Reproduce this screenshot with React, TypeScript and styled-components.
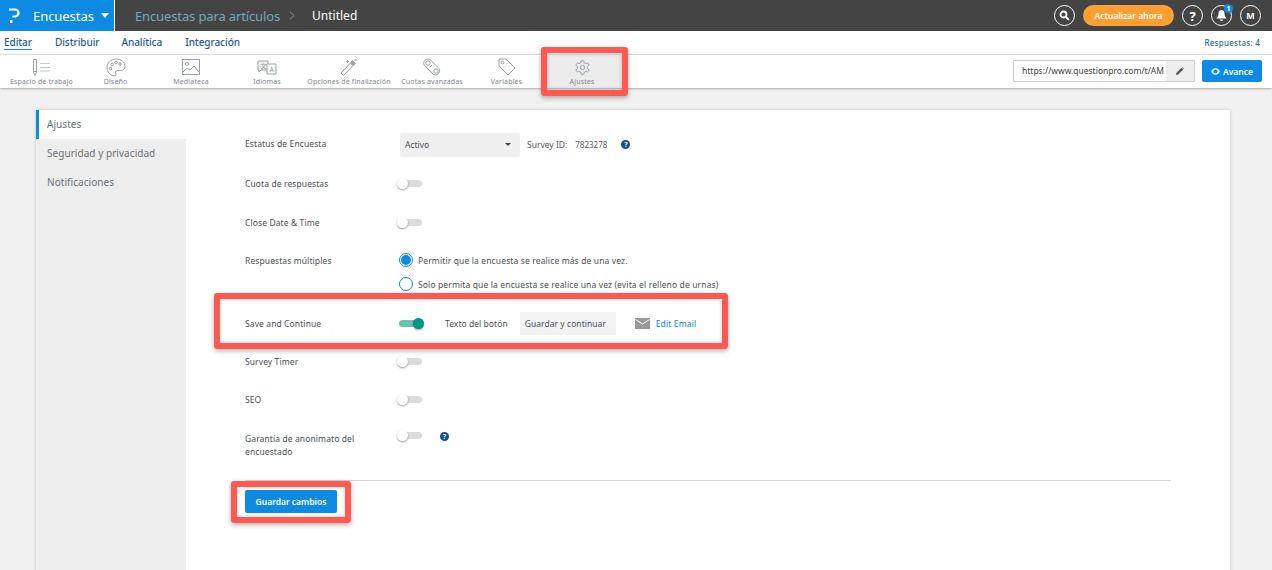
import React from "react";
import styled, { createGlobalStyle } from "styled-components";

const Global = createGlobalStyle`
  html, body { margin: 0; padding: 0; background: #f1f1f1; overflow: hidden; }
  * { box-sizing: border-box; }
  body { font-family: "Noto Sans", "Open Sans", sans-serif; }
`;
const Page = styled.div`position: relative; width: 1272px; height: 570px; overflow: hidden; background: #f1f1f1;`;
const Header = styled.header`display: flex; align-items: center; height: 31px; background: #444444; color: #fff;`;
const Brand = styled.div`display: flex; align-items: center; width: 115px; height: 31px; background: #0d8ae2; border-right: 1px solid #fff; padding-left: 9px; flex: none;`;
const BrandName = styled.span`font-size: 13px; margin-left: 13px; letter-spacing: -0.05px;`;
const Caret = styled.span`width: 0; height: 0; border: 4px solid transparent; border-top: 5px solid #fff; border-bottom: 0; margin-left: 7px;`;
const Crumb = styled.span`font-size: 13px; color: #72a9b8; margin-left: 20px; letter-spacing: -0.13px;`;
const Chevron = styled.span`margin-left: 9px; display: flex; color: #8c8c8c;`;
const CurrentTitle = styled.span`font-size: 12px; margin-left: 17px; color: #fff;`;
const HeaderRight = styled.div`display: flex; align-items: center; margin-left: auto; padding-right: 2px; width: 218px;`;
const CircleBtn = styled.span<{ $ml: number; $fs?: number }>`position: relative; display: flex; align-items: center; justify-content: center; width: 21px; height: 21px; border: 1px solid #fff; border-radius: 50%; margin-left: ${p => p.$ml}px; font-size: ${p => p.$fs ?? 12}px; font-weight: 700; flex: none;`;
const Upgrade = styled.span`display: flex; align-items: center; justify-content: center; width: 91px; height: 21px; background: #ff9e33; border-radius: 11px; font-size: 8.5px; font-weight: 600; margin-left: 8px; flex: none;`;
const NotifBadge = styled.span`position: absolute; top: -2px; right: -2px; width: 9px; height: 9px; border-radius: 50%; background: #0d8ae2; font-size: 7px; font-weight: 700; line-height: 9px; text-align: center;`;

const NavRow = styled.nav`display: flex; align-items: center; height: 23px; background: #fff; padding: 0 12px 0 4px; border-bottom: 0;`;
const NavLink = styled.span<{ $active?: boolean; $ml: number }>`font-size: 10px; font-weight: 500; color: #1f5c99; margin-left: ${p => p.$ml}px; line-height: 13px; border-bottom: ${p => (p.$active ? "1px solid #0d8ae2" : "1px solid transparent")}; letter-spacing: -0.05px;`;
const Responses = styled.span`margin-left: auto; font-size: 8px; font-weight: 500; color: #2f6aa3; letter-spacing: 0.25px;`;

const Toolbar = styled.div`display: flex; align-items: flex-start; height: 34px; background: #fff; border-top: 1px solid #dcdcdc; box-shadow: 0 1px 2px rgba(0,0,0,.28); position: relative;`;
const Tool = styled.div<{ $w: number; $active?: boolean }>`display: flex; flex-direction: column; align-items: center; width: ${p => p.$w}px; height: 33px; flex: none; background: ${p => (p.$active ? "#ececec" : "transparent")}; padding-right: ${p => (p.$active ? "5px" : "0")};`;
const ToolIcon = styled.span`display: flex; height: 22px; align-items: center; justify-content: center; padding-top: 2px;`;
const ToolLabel = styled.span`font-size: 7px; font-weight: 400; color: #7f8692; line-height: 10px; white-space: nowrap; letter-spacing: 0.15px;`;
const ToolRight = styled.div`display: flex; align-items: center; margin-left: auto; padding: 5px 10px 0 0;`;
const UrlBox = styled.div`display: flex; width: 182px; height: 22px; border: 1px solid #cfcfcf; background: #fff; border-radius: 1px;`;
const UrlText = styled.span`width: 152px; overflow: hidden; white-space: nowrap; font-size: 8.5px; line-height: 20px; padding-left: 8px; color: #444; flex: none;`;
const UrlEdit = styled.span`display: flex; flex: 1; align-items: center; justify-content: center; background: #eeeeee;`;
const Preview = styled.span`display: flex; align-items: center; justify-content: center; gap: 3px; width: 60px; height: 22px; margin-left: 7px; background: #0d8ae2; border-radius: 2px; color: #fff; font-size: 8.5px; font-weight: 600;`;

const Main = styled.main`padding: 22px 42px 0 36px;`;
const Card = styled.section`display: flex; height: 470px; background: #fff; box-shadow: 0 0 3px rgba(0,0,0,.22);`;
const Side = styled.aside`width: 150px; background: #eeeeee; flex: none;`;
const SideItem = styled.div<{ $active?: boolean }>`height: 29px; line-height: 29px; font-size: 10px; letter-spacing: 0.05px; color: #6a7078; padding-left: ${p => (p.$active ? "8px" : "11px")}; background: ${p => (p.$active ? "#fff" : "transparent")}; border-left: ${p => (p.$active ? "3px solid #0d8ae2" : "0")};`;
const Form = styled.div`flex: 1; padding: 15px 59px 0 59px;`;
const Row = styled.div<{ $h: number }>`display: flex; align-items: center; height: ${p => p.$h}px;`;
const TopRow = styled.div<{ $h: number; $pt: number }>`display: flex; align-items: flex-start; height: ${p => p.$h}px; padding-top: ${p => p.$pt}px;`;
const Label = styled.div<{ $lift?: boolean }>`width: 152px; flex: none; font-size: 8.5px; line-height: 13px; color: #4b5159; letter-spacing: 0.1px; margin-bottom: ${p => (p.$lift ? "3px" : "0")};`;
const Select = styled.div`display: flex; align-items: center; justify-content: space-between; width: 120px; height: 24px; background: #efefef; border-radius: 2px; padding: 0 9px 0 5px; margin-left: 3px; font-size: 8.5px; color: #4b5159;`;
const SelectCaret = styled.span`width: 0; height: 0; border: 3px solid transparent; border-top: 3px solid #444; border-bottom: 0;`;
const SurveyLabel = styled.span`font-size: 8.5px; color: #555b63; margin-left: 7px;`;
const SurveyId = styled.span`font-size: 8px; color: #555b63; margin-left: 8px;`;
const Help = styled.span<{ $ml: number }>`display: flex; align-items: center; justify-content: center; width: 9px; height: 9px; border-radius: 50%; background: #0f4f96; color: #fff; font-size: 7px; font-weight: 700; margin-left: ${p => p.$ml}px; flex: none;`;
const Track = styled.span<{ $on?: boolean }>`position: relative; display: block; width: 24px; height: 7px; border-radius: 4px; margin-left: ${p => (p.$on ? "2px" : "1px")}; background: ${p => (p.$on ? "#6fc0b4" : "#dcdcdc")}; flex: none;`;
const Knob = styled.span<{ $on?: boolean }>`position: absolute; top: -2px; left: ${p => (p.$on ? "14px" : "-1px")}; width: 11px; height: 11px; border-radius: 50%; background: ${p => (p.$on ? "#009784" : "#fff")}; box-shadow: 0 1px 2px rgba(0,0,0,.4);`;
const Radios = styled.div`display: flex; flex-direction: column; margin: -6px 0 0 2px;`;
const RadioRow = styled.div`display: flex; align-items: center; height: 24px;`;
const Radio = styled.span<{ $on?: boolean }>`display: flex; align-items: center; justify-content: center; width: 14px; height: 14px; border: 1px solid #0d8ae2; border-radius: 50%; background: #fff; flex: none; &::after { content: ""; display: ${p => (p.$on ? "block" : "none")}; width: 10px; height: 10px; border-radius: 50%; background: #0d8ae2; }`;
const RadioText = styled.span`font-size: 8.5px; color: #4b5159; margin-left: 5px; white-space: nowrap; letter-spacing: 0.13px;`;
const ButtonTextLabel = styled.span`font-size: 8.5px; color: #4b5159; margin-left: 22px; letter-spacing: 0.05px;`;
const TextBox = styled.span`display: flex; align-items: center; width: 96px; height: 23px; margin-left: 12px; padding-left: 5px; background: #f3f3f3; font-size: 8.5px; color: #4b5159; white-space: nowrap; overflow: hidden; letter-spacing: 0.05px;`;
const MailWrap = styled.span`display: flex; margin-left: 19px;`;
const EditLink = styled.span`font-size: 8.5px; color: #0d8ae2; margin-left: 6px; letter-spacing: 0.15px;`;
const Divider = styled.hr`height: 1px; border: 0; background: #d4d4d4; margin: 0; width: 926px;`;
const SaveBtn = styled.button`display: block; width: 92px; height: 23px; margin-top: 9px; border: 0; border-radius: 2px; background: #0d8ae2; color: #fff; font-family: inherit; font-size: 8.5px; font-weight: 600; padding: 0;`;

const Mark = styled.div<{ $x: number; $y: number; $w: number; $h: number }>`
  position: absolute; left: ${p => p.$x}px; top: ${p => p.$y}px; width: ${p => p.$w}px; height: ${p => p.$h}px;
  border: 6px solid #ff5a52; border-radius: 3px; box-shadow: 0 2px 5px rgba(0,0,0,.3), inset 0 0 4px rgba(0,0,0,.22); pointer-events: none;
`;

const S = { fill: "none", stroke: "#9aa0aa", strokeWidth: 1 } as const;
const icons = {
  work: <svg width="20" height="17" viewBox="0 0 20 17" {...S}><path d="M1.5 .5h3v13l-1.500 3-1.500-3zM1.500 12.500h3" /><path d="M8 4.500h10M8 8.500h10M8 12h10" stroke="#c4c7cc" /></svg>,
  palette: <svg width="20" height="19" viewBox="0 0 20 19" {...S}><path d="M10 1C5 1 1 4.800 1 9.500S4.800 18 8.600 18c2.200 0 1.700-2.200 1-3-.8-1 0-2.500 1.600-2.500h3.300c2.700 0 4.500-1.600 4.500-4C19 4 15 1 10 1z" /><circle cx="6" cy="6.500" r="1.300" /><circle cx="10" cy="4.500" r="1.300" /><circle cx="14" cy="6" r="1.300" /><circle cx="4.500" cy="10.500" r="1.300" /></svg>,
  image: <svg width="18" height="16" viewBox="0 0 18 16" {...S}><rect x=".5" y=".5" width="17" height="15" /><circle cx="5" cy="5" r="1.500" /><path d="M1 13l4-4 3 2 4-4 5 6" /></svg>,
  lang: <svg width="20" height="15" viewBox="0 0 20 15" {...S}><path d="M1 1h10v9H4l-2 2v-2H1z" fill="#f2f2f2" /><path d="M10 4h9v10H10z" fill="#fff" /><text x="12.500" y="11.500" fontSize="6.500" fill="#8b929e" stroke="none" fontFamily="Noto Sans">A</text><text x="3.500" y="7.500" fontSize="6" fill="#8b929e" stroke="none" fontFamily="Noto Sans CJK JP">文</text></svg>,
  wand: <svg width="18" height="18" viewBox="0 0 18 18" {...S}><path d="M1 15l9.500-10 2.500 2.500L3.500 17.500z" /><path d="M10.500 5l2-2.500 3 3L13 7.500z" fill="#a0a5ad" /><path d="M15 1v2M17 2h-2M7.500 2v3M6 3.500h3" stroke="#a9aeb6" /></svg>,
  quota: <svg width="18" height="18" viewBox="0 0 18 18" {...S}><path d="M2 2.200a4 4 0 0 1 5.700 0l8.300 8.300a4.200 4.200 0 0 1-5.800 5.800L2 8a4 4 0 0 1 0-5.800z" /><circle cx="5" cy="5" r="2.200" /><circle cx="13" cy="13" r="2.200" /><path d="M7 9l2-2" /></svg>,
  tag: <svg width="18" height="18" viewBox="0 0 18 18" {...S}><path d="M1 1h7l9 9-7 7-9-9z" /><circle cx="4.500" cy="4.500" r="1.400" /></svg>,
  gear: <svg width="17" height="17" viewBox="0 0 24 24" fill="none" stroke="#8f96a2" strokeWidth="1.400" strokeLinejoin="round"><path d="M12.220 2h-.440a2 2 0 0 0-2 2v.180a2 2 0 0 1-1 1.730l-.430.250a2 2 0 0 1-2 0l-.150-.080a2 2 0 0 0-2.730.730l-.220.380a2 2 0 0 0 .730 2.730l.150.100a2 2 0 0 1 1 1.720v.510a2 2 0 0 1-1 1.740l-.150.090a2 2 0 0 0-.730 2.730l.220.380a2 2 0 0 0 2.730.730l.150-.080a2 2 0 0 1 2 0l.430.250a2 2 0 0 1 1 1.730V20a2 2 0 0 0 2 2h.440a2 2 0 0 0 2-2v-.180a2 2 0 0 1 1-1.730l.430-.250a2 2 0 0 1 2 0l.150.080a2 2 0 0 0 2.730-.730l.220-.390a2 2 0 0 0-.730-2.730l-.150-.080a2 2 0 0 1-1-1.740v-.500a2 2 0 0 1 1-1.740l.150-.090a2 2 0 0 0 .730-2.730l-.220-.380a2 2 0 0 0-2.730-.730l-.150.080a2 2 0 0 1-2 0l-.430-.250a2 2 0 0 1-1-1.730V4a2 2 0 0 0-2-2z" /><circle cx="12" cy="12" r="3" /></svg>,
};

const tools = [
  { w: 83, label: "Espacio de trabajo", icon: icons.work },
  { w: 65, label: "Diseño", icon: icons.palette },
  { w: 86, label: "Mediateca", icon: icons.image },
  { w: 66, label: "Idiomas", icon: icons.lang },
  { w: 98, label: "Opciones de finalización", icon: icons.wand },
  { w: 68, label: "Cuotas avanzadas", icon: icons.quota },
  { w: 81, label: "Variables", icon: icons.tag },
];

const Toggle = ({ on }: { on?: boolean }) => <Track $on={on}><Knob $on={on} /></Track>;

export default function App() {
  return (
    <Page>
      <Global />
      <Header>
        <Brand>
          <svg width="11" height="15" viewBox="0 0 11 15" fill="none" stroke="#fff" strokeWidth="2.200">
            <path d="M0 1.500h6a3.400 3.400 0 0 1 0 7H3.500" />
            <rect x="1" y="12" width="2.400" height="3" fill="#fff" stroke="none" />
          </svg>
          <BrandName>Encuestas</BrandName>
          <Caret />
        </Brand>
        <Crumb>Encuestas para artículos</Crumb>
        <Chevron>
          <svg width="6" height="9" viewBox="0 0 6 9" fill="none" stroke="currentColor" strokeWidth="1"><path d="M1 .8l4 3.700-4 3.700" /></svg>
        </Chevron>
        <CurrentTitle>Untitled</CurrentTitle>
        <HeaderRight>
          <CircleBtn $ml={0}>
            <svg width="11" height="11" viewBox="0 0 11 11" fill="none" stroke="#fff" strokeWidth="1.800"><circle cx="4.500" cy="4.500" r="3" /><path d="M7 7l3 3" /></svg>
          </CircleBtn>
          <Upgrade>Actualizar ahora</Upgrade>
          <CircleBtn $ml={8} $fs={13}>?</CircleBtn>
          <CircleBtn $ml={8}>
            <svg width="11" height="12" viewBox="0 0 11 12" fill="#fff"><path d="M5.500 0C3.500 0 2.500 1.500 2.500 3.500 2.500 6.500 1 7.500.5 8.500h10C10 7.500 8.500 6.500 8.500 3.500 8.500 1.500 7.500 0 5.500 0zM4 9.500h3a1.500 1.500 0 0 1-3 0z" /></svg>
            <NotifBadge>1</NotifBadge>
          </CircleBtn>
          <CircleBtn $ml={8} $fs={9}>M</CircleBtn>
        </HeaderRight>
      </Header>
      <NavRow>
        <NavLink $active $ml={0}>Editar</NavLink>
        <NavLink $ml={23}>Distribuir</NavLink>
        <NavLink $ml={22}>Analítica</NavLink>
        <NavLink $ml={23}>Integración</NavLink>
        <Responses>Respuestas: 4</Responses>
      </NavRow>
      <Toolbar>
        {tools.map(t => (
          <Tool key={t.label} $w={t.w}>
            <ToolIcon>{t.icon}</ToolIcon>
            <ToolLabel>{t.label}</ToolLabel>
          </Tool>
        ))}
        <Tool $w={75} $active>
          <ToolIcon>{icons.gear}</ToolIcon>
          <ToolLabel>Ajustes</ToolLabel>
        </Tool>
        <ToolRight>
          <UrlBox>
            <UrlText>https://www.questionpro.com/t/AM</UrlText>
            <UrlEdit>
              <svg width="8" height="8" viewBox="0 0 8 8" fill="#555"><path d="M0 8l.5-2.200L5.500.8l1.700 1.700-5 5zM6 .3l.5-.3L8 1.500l-.3.500z" /></svg>
            </UrlEdit>
          </UrlBox>
          <Preview>
            <svg width="9" height="7" viewBox="0 0 9 7" fill="#cfe8fb"><path d="M4.500 0C2.500 0 1 1.500 0 3.500 1 5.500 2.500 7 4.500 7S8 5.500 9 3.500C8 1.500 6.500 0 4.500 0zm0 5.500a2 2 0 1 1 0-4 2 2 0 0 1 0 4z" /></svg>
            Avance
          </Preview>
        </ToolRight>
      </Toolbar>
      <Main>
        <Card>
          <Side>
            <SideItem $active>Ajustes</SideItem>
            <SideItem>Seguridad y privacidad</SideItem>
            <SideItem>Notificaciones</SideItem>
          </Side>
          <Form>
            <Row $h={39}>
              <Label $lift>Estatus de Encuesta</Label>
              <Select>Activo<SelectCaret /></Select>
              <SurveyLabel>Survey ID:</SurveyLabel>
              <SurveyId>7823278</SurveyId>
              <Help $ml={14}>?</Help>
            </Row>
            <Row $h={39}><Label>Cuota de respuestas</Label><Toggle /></Row>
            <Row $h={39}><Label>Close Date &amp; Time</Label><Toggle /></Row>
            <TopRow $h={61} $pt={12}>
              <Label>Respuestas múltiples</Label>
              <Radios>
                <RadioRow><Radio $on /><RadioText>Permitir que la encuesta se realice más de una vez.</RadioText></RadioRow>
                <RadioRow><Radio /><RadioText>Solo permita que la encuesta se realice una vez (evita el relleno de urnas)</RadioText></RadioRow>
              </Radios>
            </TopRow>
            <Row $h={40}>
              <Label>Save and Continue</Label>
              <Toggle on />
              <ButtonTextLabel>Texto del botón</ButtonTextLabel>
              <TextBox>Guardar y continuar</TextBox>
              <MailWrap>
                <svg width="15" height="11" viewBox="0 0 15 11"><path d="M0 0h15v11H0z" fill="#999" /><path d="M.5 1.500L7.500 6l7-4.500" fill="none" stroke="#fff" strokeWidth="1" /></svg>
              </MailWrap>
              <EditLink>Edit Email</EditLink>
            </Row>
            <Row $h={37}><Label>Survey Timer</Label><Toggle /></Row>
            <Row $h={38}><Label>SEO</Label><Toggle /></Row>
            <TopRow $h={62} $pt={14}>
              <Label>Garantía de anonimato del<br />encuestado</Label>
              <Toggle />
              <Help $ml={18}>?</Help>
            </TopRow>
            <Divider />
            <SaveBtn>Guardar cambios</SaveBtn>
          </Form>
        </Card>
      </Main>
      <Mark $x={541} $y={47} $w={87} $h={49} />
      <Mark $x={214} $y={293} $w={514} $h={56} />
      <Mark $x={231} $y={481} $w={120} $h={42} />
    </Page>
  );
}
